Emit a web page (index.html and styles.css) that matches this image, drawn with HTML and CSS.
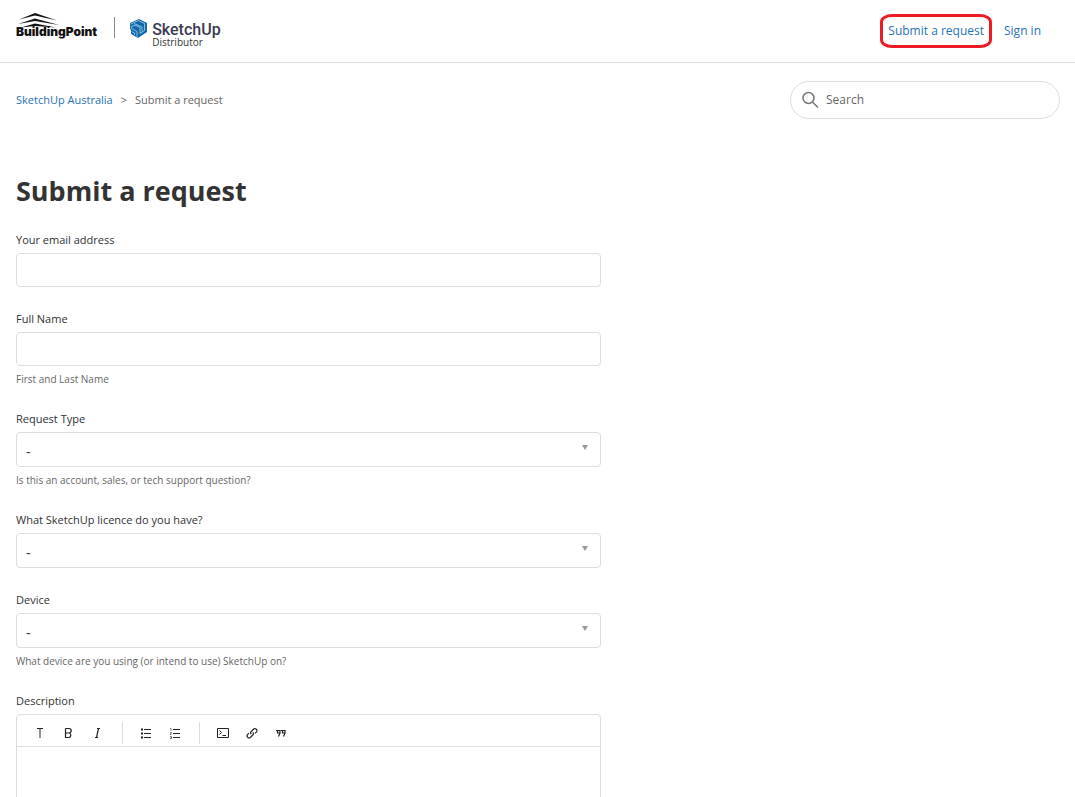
FILE: index.html
```html
<!DOCTYPE html>
<html lang="en-AU">
<head>
<meta charset="utf-8">
<meta name="viewport" content="width=device-width, initial-scale=1">
<title>Submit a request – SketchUp Australia</title>
<link rel="stylesheet" href="styles.css">
</head>
<body>
<header class="header">
  <a class="logo" href="#" aria-label="SketchUp Australia home">
    <span class="bp">
      <svg class="bp-roof" width="44" height="16" viewBox="0 0 44 16" aria-hidden="true">
        <path d="M3 6.600 19 0 41 7.600 19 2.400Z" fill="#111"/>
        <path d="M2 11 19 5.600 43 12 19 8Z" fill="#111"/>
        <path d="M5 14.500 19 10.500 40 14.500 19 13Z" fill="#111"/>
      </svg>
      <span class="bp-name">BuildingPoint</span>
    </span>
    <span class="logo-rule"></span>
    <span class="su">
      <svg width="18" height="19" viewBox="0 0 18 19" aria-hidden="true">
        <path d="M9 0 17 4V13L8 19 1 15V11L0 10V4Z" fill="#1268a8"/>
        <path d="M.5 5 8.500 1.500 14.500 4.500V11.500L10 14.500V8.500L5 6 1.500 7.500V9.500L7 12.500V18M4 4.500 12 8V12.500M1.500 12.500 4.500 14V16" fill="none" stroke="#a9d2ee" stroke-width=".8"/>
      </svg>
      <span class="su-words"><span class="su-name">SketchUp</span><span class="su-sub">Distributor</span></span>
    </span>
  </a>
  <nav class="nav">
    <a class="nav-link nav-marked" href="#">Submit a request</a>
    <a class="nav-link" href="#">Sign in</a>
  </nav>
</header>
<main class="container">
  <div class="sub-nav">
    <nav class="breadcrumbs" aria-label="Breadcrumb">
      <a href="#">SketchUp Australia</a><span class="crumb-sep">&gt;</span><span>Submit a request</span>
    </nav>
    <form class="search" role="search">
      <svg width="18" height="18" viewBox="0 0 18 18" fill="none" stroke="#777" stroke-width="1.500" aria-hidden="true"><circle cx="6.500" cy="7" r="5.500"/><path d="M10.500 11 16 16.500"/></svg>
      <input class="search-input" type="search" placeholder="Search" aria-label="Search">
    </form>
  </div>
  <h1 class="title">Submit a request</h1>
  <form class="form">
    <div class="field">
      <label for="email">Your email address</label>
      <input class="control" id="email" type="email">
    </div>
    <div class="field">
      <label for="name">Full Name</label>
      <input class="control" id="name" type="text" aria-describedby="name-hint">
      <p class="hint" id="name-hint">First and Last Name</p>
    </div>
    <div class="field">
      <label for="type">Request Type</label>
      <div class="select"><select class="control" id="type" aria-describedby="type-hint"><option>-</option></select><svg class="caret" width="6" height="5" viewBox="0 0 6 5" aria-hidden="true"><path d="M0 0H6L3 5Z" fill="#999"/></svg></div>
      <p class="hint" id="type-hint">Is this an account, sales, or tech support question?</p>
    </div>
    <div class="field">
      <label for="licence">What SketchUp licence do you have?</label>
      <div class="select"><select class="control" id="licence"><option>-</option></select><svg class="caret" width="6" height="5" viewBox="0 0 6 5" aria-hidden="true"><path d="M0 0H6L3 5Z" fill="#999"/></svg></div>
    </div>
    <div class="field">
      <label for="device">Device</label>
      <div class="select"><select class="control" id="device" aria-describedby="device-hint"><option>-</option></select><svg class="caret" width="6" height="5" viewBox="0 0 6 5" aria-hidden="true"><path d="M0 0H6L3 5Z" fill="#999"/></svg></div>
      <p class="hint" id="device-hint">What device are you using (or intend to use) SketchUp on?</p>
    </div>
    <div class="field">
      <label for="description">Description</label>
      <div class="editor">
        <div class="toolbar" role="toolbar" aria-label="Formatting">
          <div class="tools">
            <button type="button" class="tool" aria-label="Text style"><svg width="12" height="12" viewBox="0 0 12 12"><path d="M3 1.500H9M6 1.500V11"/></svg></button>
            <button type="button" class="tool" aria-label="Bold"><svg width="12" height="12" viewBox="0 0 12 12"><path d="M2.500 1.500H6A2.200 2.200 0 0 1 6 6H2.500M6 6A2.300 2.300 0 0 1 6 10.500H2.500V1.500" stroke-width="1.200"/></svg></button>
            <button type="button" class="tool" aria-label="Italic"><svg width="12" height="12" viewBox="0 0 12 12"><path d="M5 1.500H8M3 10.500H6M6.500 1.500 4.500 10.500" stroke-width="1.200"/></svg></button>
          </div>
          <div class="tools">
            <button type="button" class="tool" aria-label="Bulleted list"><svg width="12" height="12" viewBox="0 0 12 12"><path d="M4 2.500H11M4 6.500H11M4 10.500H11"/><path d="M1 2.500H3M1 6.500H3M1 10.500H3" stroke-width="2"/></svg></button>
            <button type="button" class="tool" aria-label="Numbered list"><svg width="12" height="12" viewBox="0 0 12 12"><path d="M4 2.500H11M4 6.500H11M4 10.500H11"/><path d="M1 1.500H2V4M1 5.500H2.500L1 7.500H2.500M1 9.500H2.500V11.500H1M1.500 10.500H2.500" stroke-width=".6"/></svg></button>
          </div>
          <div class="tools">
            <button type="button" class="tool" aria-label="Code"><svg width="12" height="12" viewBox="0 0 12 12"><path d="M.5 1.500H11.500V10.500H.5ZM2.500 3.500 4.500 5.500 2.500 7.500M5.500 8.500H9"/></svg></button>
            <button type="button" class="tool" aria-label="Link"><svg width="12" height="12" viewBox="0 0 12 12"><path d="M5.200 7.200A2 2 0 0 1 5.200 4.500L7.700 2A2 2 0 0 1 10.500 4.800L9 6.300M6.800 5.300A2 2 0 0 1 6.800 8L4.300 10.500A2 2 0 0 1 1.500 7.700L3 6.200" stroke-width="1.200"/></svg></button>
            <button type="button" class="tool" aria-label="Quote"><svg width="12" height="12" viewBox="0 0 12 12"><path d="M2.500 3.500H5V6H2.500ZM7.500 3.500H10V6H7.500ZM5 6 3.500 9.500M10 6 8.500 9.500M1 3.500H2.500M6 3.500H7.500" stroke-width="1.200"/></svg></button>
          </div>
        </div>
        <textarea class="editor-text" id="description"></textarea>
      </div>
    </div>
  </form>
</main>
</body>
</html>
```
FILE: styles.css
```css
* { box-sizing: border-box; }
html { overflow: hidden; }
body {
  margin: 0;
  background: #fff;
  color: #2f3133;
  font-family: "Open Sans", "Noto Sans", sans-serif;
  font-size: 11px;
  line-height: 16px;
}
a { color: #1f73b7; text-decoration: none; }
svg { display: block; }

.header {
  display: flex;
  align-items: center;
  justify-content: space-between;
  height: 63px;
  padding: 0 32px 0 16px;
  border-bottom: 1px solid #ddd;
}
.logo { display: flex; align-items: flex-start; color: #111; height: 36px; }
.bp { display: flex; flex-direction: column; }
.bp-name {
  font: 900 12px/14px Inter, sans-serif;
  margin-top: -4px;
}
.logo-rule { width: 1px; height: 21px; margin: 4px 15px 0 17px; background: #888; }
.su { display: flex; gap: 4px; padding-top: 6px; }
.su-words { display: flex; flex-direction: column; padding-top: 2px; }
.su-name { font: 500 16px/18px Roboto, sans-serif; color: #3b3a52; }
.su-sub { font-size: 10px; line-height: 10px; margin-top: -2px; color: #333; }

.nav { display: flex; align-items: center; gap: 10px; }
.nav-link { font-size: 12px; line-height: 18px; padding: 6px 2px; }
.nav-marked { padding: 5px; border: 3px solid #ed1c24; border-radius: 12px / 8px; }

.container { padding: 18px 15px 0 16px; }
.sub-nav { display: flex; align-items: center; justify-content: space-between; }
.breadcrumbs { display: flex; color: #666; }
.crumb-sep { margin: 0 8px; }
.search {
  display: flex;
  align-items: center;
  gap: 6px;
  width: 270px;
  height: 38px;
  padding: 0 11px;
  border: 1px solid #ddd;
  border-radius: 19px;
}
.search-input {
  flex: 1;
  min-width: 0;
  padding: 0;
  border: 0;
  outline: 0;
  background: none;
  font: inherit;
  font-size: 12px;
}
.search-input::placeholder { color: #666; opacity: 1; }

.title { margin: 52px 0 21px; font-size: 27px; line-height: 40px; font-weight: 700; color: #333; }
.form { display: flex; flex-direction: column; gap: 24px; width: 56%; }
.field { display: flex; flex-direction: column; gap: 5px; }
.hint { margin: 0; font-size: 10px; color: #666; }
.control {
  display: block;
  width: 100%;
  height: 34px;
  padding: 0 10px;
  border: 1px solid #ddd;
  border-radius: 4px;
  background: #fff;
  color: #333;
  font: inherit;
}
.select { position: relative; }
.select .control { height: 35px; padding: 5px 9px 0; font-size: 14px; appearance: none; }
.caret { position: absolute; right: 13px; top: 13px; }

.editor { border: 1px solid #ddd; border-radius: 4px; }
.toolbar { display: flex; height: 32px; padding: 7px 11px 2px; border-bottom: 1px solid #ddd; }
.tools { display: flex; align-items: center; gap: 5px; padding-right: 12px; }
.tools + .tools { padding-left: 11px; border-left: 1px solid #ddd; }
.tool { display: grid; place-items: center; width: 24px; height: 22px; padding: 0; border: 0; background: none; }
.tool svg { fill: none; stroke: #222; }
.editor-text { display: block; width: 100%; height: 120px; padding: 10px; border: 0; resize: none; background: none; font: inherit; }
```
